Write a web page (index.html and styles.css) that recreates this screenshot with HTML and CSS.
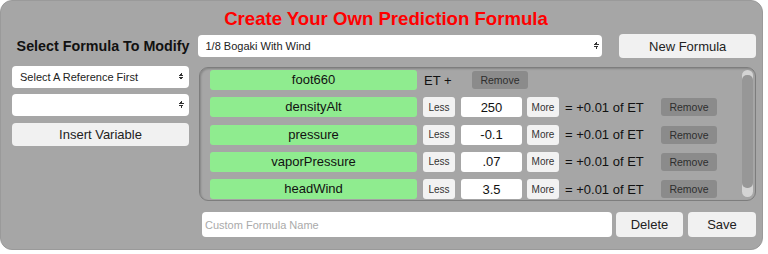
FILE: index.html
```html
<!DOCTYPE html>
<html lang="en">
<head>
  <meta charset="UTF-8">
  <meta name="viewport" content="width=device-width, initial-scale=1.0">
  <title>Create Your Own Prediction Formula</title>
  <link rel="stylesheet" href="styles.css">
</head>
<body>
  <div class="panel">
    <h2 class="title">Create Your Own Prediction Formula</h2>

    <div class="top-row">
      <label class="top-label" for="formula-select">Select Formula To Modify</label>
      <div class="select-wrap wide">
        <select id="formula-select">
          <option>1/8 Bogaki With Wind</option>
        </select>
      </div>
      <button type="button" class="btn new-btn">New Formula</button>
    </div>

    <div class="main-row">
      <div class="side">
        <div class="select-wrap">
          <select>
            <option>Select A Reference First</option>
          </select>
        </div>
        <div class="select-wrap">
          <select>
            <option></option>
          </select>
        </div>
        <button type="button" class="btn insert-btn">Insert Variable</button>
      </div>

      <div class="editor">
        <div class="formula-box">
          <div class="term-list">
            <div class="term">
              <span class="var">foot660</span>
              <span class="et">ET +</span>
              <button type="button" class="remove-btn">Remove</button>
            </div>
            <div class="term">
              <span class="var">densityAlt</span>
              <button type="button" class="step-btn">Less</button>
              <input class="value" type="text" value="250">
              <button type="button" class="step-btn">More</button>
              <span class="of-et">= +0.01 of ET</span>
              <button type="button" class="remove-btn">Remove</button>
            </div>
            <div class="term">
              <span class="var">pressure</span>
              <button type="button" class="step-btn">Less</button>
              <input class="value" type="text" value="-0.1">
              <button type="button" class="step-btn">More</button>
              <span class="of-et">= +0.01 of ET</span>
              <button type="button" class="remove-btn">Remove</button>
            </div>
            <div class="term">
              <span class="var">vaporPressure</span>
              <button type="button" class="step-btn">Less</button>
              <input class="value" type="text" value=".07">
              <button type="button" class="step-btn">More</button>
              <span class="of-et">= +0.01 of ET</span>
              <button type="button" class="remove-btn">Remove</button>
            </div>
            <div class="term">
              <span class="var">headWind</span>
              <button type="button" class="step-btn">Less</button>
              <input class="value" type="text" value="3.5">
              <button type="button" class="step-btn">More</button>
              <span class="of-et">= +0.01 of ET</span>
              <button type="button" class="remove-btn">Remove</button>
            </div>
          </div>
          <div class="scrollbar"><div class="thumb"></div></div>
        </div>

        <div class="save-row">
          <input class="name-input" type="text" placeholder="Custom Formula Name">
          <button type="button" class="btn delete-btn">Delete</button>
          <button type="button" class="btn save-btn">Save</button>
        </div>
      </div>
    </div>
  </div>
</body>
</html>
```

FILE: styles.css
```css
body {
  margin: 0;
  background-color: #fff;
  font-family: "Liberation Sans", Arial, sans-serif;
  color: #222;
}

.panel {
  box-sizing: border-box;
  width: 763px;
  height: 250px;
  background-color: #a6a6a6;
  border: 1px solid #9a9a9a;
  border-radius: 12px;
  padding: 7px 6px 0 11px;
}

.title {
  margin: 0;
  text-align: center;
  color: #f00;
  font-size: 18.6px;
  font-weight: bold;
  line-height: 22px;
  padding-left: 4px;
}

.top-row {
  display: flex;
  align-items: center;
  margin-top: 4px;
  height: 24px;
}

.top-label {
  width: 178px;
  text-align: right;
  font-size: 14.3px;
  font-weight: bold;
  color: #111;
}

.select-wrap {
  position: relative;
  height: 22px;
}

/* up/down arrows of the select */
.select-wrap::after {
  content: "";
  position: absolute;
  right: 5px;
  top: 6px;
  width: 5px;
  height: 10px;
  background:
    linear-gradient(to top right, transparent 50%, #333 50%) left 0 top 5px / 3px 3px no-repeat,
    linear-gradient(to top left, transparent 50%, #333 50%) right 0 top 5px / 3px 3px no-repeat,
    linear-gradient(to bottom right, transparent 50%, #333 50%) left 0 top 1px / 3px 3px no-repeat,
    linear-gradient(to bottom left, transparent 50%, #333 50%) right 0 top 1px / 3px 3px no-repeat;
  pointer-events: none;
}

.select-wrap.wide {
  width: 406px;
  margin-left: 8px;
}

.select-wrap.wide::after {
  right: 3px;
}

.select-wrap select {
  appearance: none;
  -webkit-appearance: none;
  box-sizing: border-box;
  width: 100%;
  height: 22px;
  border: none;
  border-radius: 4px;
  background-color: #fff;
  font-family: inherit;
  font-size: 11px;
  color: #222;
  padding: 0 8px;
}

.btn {
  box-sizing: border-box;
  border: none;
  border-radius: 4px;
  background-color: #f1f1f1;
  font-family: inherit;
  font-size: 13px;
  color: #222;
  padding: 0;
}

.new-btn {
  width: 137px;
  height: 24px;
  margin-left: 17px;
}

.main-row {
  display: flex;
  margin-top: 8px;
}

.side {
  display: flex;
  flex-direction: column;
  gap: 6px;
  width: 178px;
}

.insert-btn {
  height: 23px;
  margin-top: 1px;
}

.editor {
  margin-left: 10px;
  width: 558px;
}

.formula-box {
  box-sizing: border-box;
  display: flex;
  height: 134px;
  margin-top: 1px;
  border: 1px solid #7d7d7d;
  border-radius: 9px;
  box-shadow: inset 1px 1px 2px rgba(0, 0, 0, 0.2);
  overflow: hidden;
}

.term-list {
  flex: 1;
  padding: 2px 0 0 10px;
  overflow: hidden;
}

.scrollbar {
  display: flex;
  width: 11px;
  margin: 2px 2px 3px 0;
  border-radius: 6px;
  background-color: #d4d4d4;
  padding: 5px 0 9px;
}

.thumb {
  flex: 1;
  border-radius: 5px;
  background-color: #979797;
}

.term {
  display: flex;
  align-items: center;
  height: 20px;
  margin-bottom: 7.3px;
}

.var {
  box-sizing: border-box;
  width: 207px;
  height: 20px;
  line-height: 20px;
  border-radius: 3px;
  background-color: #8fec8f;
  text-align: center;
  font-size: 13px;
  color: #111;
}

.et {
  width: 48px;
  margin-left: 7px;
  font-size: 13px;
  color: #111;
}

.step-btn {
  box-sizing: border-box;
  width: 32px;
  height: 20px;
  margin-left: 6px;
  border: none;
  border-radius: 3px;
  background-color: #f2f2f2;
  font-family: inherit;
  font-size: 10px;
  color: #333;
  padding: 0;
}

.value {
  box-sizing: border-box;
  width: 61px;
  height: 20px;
  margin-left: 6px;
  border: none;
  border-radius: 3px;
  background-color: #fff;
  font-family: inherit;
  font-size: 13px;
  text-align: center;
  color: #111;
  padding: 0;
}

.value + .step-btn {
  margin-left: 5px;
}

.of-et {
  width: 96px;
  margin-left: 6px;
  font-size: 13px;
  color: #111;
}

.remove-btn {
  box-sizing: border-box;
  width: 56px;
  height: 18px;
  border: none;
  border-radius: 3px;
  background-color: #8b8b8b;
  font-family: inherit;
  font-size: 10.5px;
  color: #2e2e2e;
  padding: 0;
}

.save-row {
  display: flex;
  align-items: center;
  margin-top: 11px;
  margin-left: 3px;
}

.name-input {
  box-sizing: border-box;
  width: 410px;
  height: 25px;
  border: none;
  border-radius: 4px;
  background-color: #fff;
  font-family: inherit;
  font-size: 11px;
  padding: 0 3px;
}

.name-input::placeholder {
  color: #aaa;
}

.delete-btn {
  width: 67px;
  height: 25px;
  margin-left: 4px;
}

.save-btn {
  width: 68px;
  height: 25px;
  margin-left: 5px;
}
```
